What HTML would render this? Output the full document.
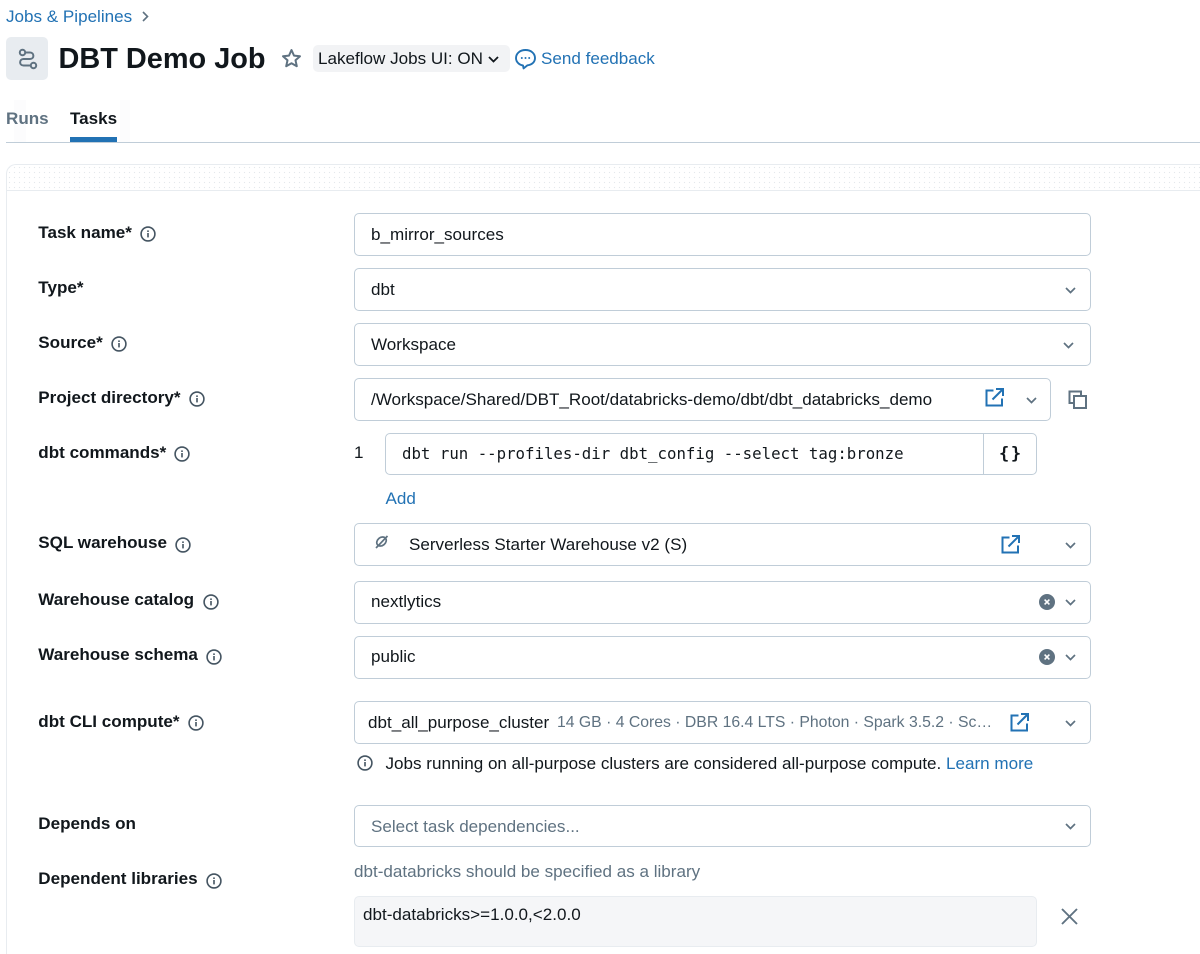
<!DOCTYPE html>
<html><head><meta charset="utf-8">
<style>
html,body{margin:0;padding:0;background:#fff;width:1200px;height:954px;overflow:hidden;}
#r{position:absolute;left:0;top:0;width:1200px;height:954px;overflow:hidden;font-family:"Liberation Sans",sans-serif;font-size:17.07px;color:#11171c;}
.a{position:absolute;white-space:nowrap;line-height:22px;}
.l{position:absolute;left:38.3px;white-space:nowrap;line-height:22px;font-weight:700;}
.box{position:absolute;box-sizing:border-box;border:1px solid #c0cdd8;border-radius:5px;background:#fff;}
.t{position:absolute;white-space:nowrap;line-height:22px;}
.link{color:#2272b4;}
svg{position:absolute;overflow:visible;}
</style></head><body><div id="r">
<svg width="0" height="0" style="position:absolute"><defs>
<g id="info"><circle cx="8" cy="8" r="6.9" fill="none" stroke="#445461" stroke-width="1.6"/><rect x="7.2" y="7" width="1.6" height="4.4" fill="#445461"/><rect x="7.2" y="4.4" width="1.6" height="1.6" fill="#445461"/></g>
<path id="chev" d="M1 1 L5.5 5.5 L10 1" fill="none" stroke="#5f7281" stroke-width="1.7"/>
<g id="ext"><path d="M8.5 2.5H1.5V17.5H17V10.5" fill="none" stroke="#2272b4" stroke-width="2"/><path d="M7.5 11.5L17.5 1.5M11 1H18V8" fill="none" stroke="#2272b4" stroke-width="2"/></g>
<g id="clr"><circle cx="8" cy="8" r="8" fill="#5f7281"/><path d="M5.6 5.6L10.4 10.4M10.4 5.6L5.6 10.4" stroke="#fff" stroke-width="1.6"/></g>
</defs></svg>

<div class="a link" style="left:6px;top:6px;">Jobs &amp; Pipelines</div>
<svg style="left:142px;top:11px" width="7" height="11"><path d="M1 1L5.5 5.5L1 10" fill="none" stroke="#5f7281" stroke-width="1.6"/></svg>

<div style="position:absolute;left:6px;top:37px;width:42px;height:43px;background:#e8ecf0;border-radius:5px;"></div>
<svg style="left:17px;top:48px" width="21" height="22" fill="none" stroke="#5f7281" stroke-width="2"><circle cx="5.5" cy="4.5" r="2.7"/><circle cx="16.5" cy="17.5" r="2.7"/><path d="M8.2 4.5H13C17.5 4.5 17.5 11 13 11H6.5C2 11 2 17.5 6.5 17.5H13.8"/></svg>
<div class="a" style="left:58.5px;top:41px;font-size:28.9px;font-weight:700;line-height:36px;">DBT Demo Job</div>
<svg style="left:281px;top:48px" width="21" height="20"><path d="M10.5 2L13 7.6L19 8.2L14.5 12.3L15.8 18.2L10.5 15.2L5.2 18.2L6.5 12.3L2 8.2L8 7.6Z" fill="none" stroke="#5f7281" stroke-width="2" stroke-linejoin="round"/></svg>
<div style="position:absolute;left:313px;top:45px;width:197px;height:27px;background:#f2f3f5;border-radius:5px;"></div>
<div class="a" style="left:318px;top:48px;">Lakeflow Jobs UI: ON</div>
<svg style="left:488px;top:56px" width="11" height="7"><path d="M1 1L5.5 5.5L10 1" fill="none" stroke="#11171c" stroke-width="1.8"/></svg>
<svg style="left:515px;top:49px" width="21" height="21"><path d="M10.5 1C5 1 1 4.5 1 9C1 13.5 5 16.2 8 16.4L8.6 19.4L12.5 16.3C17 15.8 20 13 20 9C20 4.5 16 1 10.5 1Z" fill="none" stroke="#2272b4" stroke-width="1.9" stroke-linejoin="round"/><circle cx="6.8" cy="9" r="1" fill="#2272b4"/><circle cx="10.5" cy="9" r="1" fill="#2272b4"/><circle cx="14.2" cy="9" r="1" fill="#2272b4"/></svg>
<div class="a link" style="left:541px;top:48px;">Send feedback</div>

<div style="position:absolute;left:14px;top:100px;width:12px;height:42px;background:#fcfcfd;"></div>
<div style="position:absolute;left:120px;top:100px;width:10px;height:42px;background:#fcfcfd;"></div>
<div class="a" style="left:6px;top:108px;font-weight:700;color:#5f7281;">Runs</div>
<div class="a" style="left:70px;top:108px;font-weight:700;">Tasks</div>
<div style="position:absolute;left:70px;top:137px;width:47px;height:5px;background:#2272b4;"></div>
<div style="position:absolute;left:6px;top:142px;width:1194px;height:1px;background:#c0cdd8;"></div>

<div style="position:absolute;left:6px;top:164px;width:1194px;height:790px;box-sizing:border-box;border:1px solid #e8ecf0;border-right:none;border-bottom:none;border-radius:10px 0 0 0;"></div>
<div style="position:absolute;left:7px;top:165px;width:1193px;height:25px;border-radius:9px 0 0 0;border-bottom:1px solid #e8ecf0;background-image:radial-gradient(#e4e8ec 0.7px,transparent 0.8px);background-size:5px 5px;"></div>

<!-- Task name -->
<div class="l" style="top:222px;">Task name*</div>
<svg style="left:140px;top:226px" width="16" height="16"><use href="#info"/></svg>
<div class="box" style="left:354px;top:213px;width:737px;height:43px;"></div>
<div class="t" style="left:371px;top:224px;">b_mirror_sources</div>

<!-- Type -->
<div class="l" style="top:277px;">Type*</div>
<div class="box" style="left:354px;top:268px;width:737px;height:43px;"></div>
<div class="t" style="left:371px;top:279px;">dbt</div>
<svg style="left:1065px;top:287px" width="11" height="7"><use href="#chev"/></svg>

<!-- Source -->
<div class="l" style="top:332px;">Source*</div>
<svg style="left:111px;top:336px" width="16" height="16"><use href="#info"/></svg>
<div class="box" style="left:354px;top:323px;width:737px;height:43px;"></div>
<div class="t" style="left:371px;top:334px;">Workspace</div>
<svg style="left:1063px;top:342px" width="11" height="7"><use href="#chev"/></svg>

<!-- Project dir -->
<div class="l" style="top:387px;">Project directory*</div>
<svg style="left:189px;top:391px" width="16" height="16"><use href="#info"/></svg>
<div class="box" style="left:354px;top:378px;width:697px;height:43px;"></div>
<div class="t" style="left:371px;top:389px;">/Workspace/Shared/DBT_Root/databricks-demo/dbt/dbt_databricks_demo</div>
<svg style="left:985px;top:388px" width="19" height="19"><use href="#ext"/></svg>
<svg style="left:1026px;top:397px" width="11" height="7"><use href="#chev"/></svg>
<svg style="left:1068px;top:390px" width="19" height="19" fill="none" stroke="#5f7281" stroke-width="2"><path d="M5 13H1.5V1.5H13V5"/><rect x="6" y="6" width="12" height="12" stroke="#5f7281"/></svg>

<!-- dbt commands -->
<div class="l" style="top:442px;">dbt commands*</div>
<svg style="left:174px;top:446px" width="16" height="16"><use href="#info"/></svg>
<div class="t" style="left:354px;top:442px;">1</div>
<div class="box" style="left:385px;top:433px;width:652px;height:42px;"></div>
<div style="position:absolute;left:983px;top:433px;width:1px;height:42px;background:#c0cdd8;"></div>
<div class="t" style="left:402px;top:443px;font-family:'DejaVu Sans Mono',monospace;font-size:15.73px;">dbt run --profiles-dir dbt_config --select tag:bronze</div>
<div class="t" style="left:999px;top:443px;font-family:'DejaVu Sans Mono',monospace;font-size:17px;font-weight:700;letter-spacing:1.6px;">{}</div>
<div class="a link" style="left:385.5px;top:488px;">Add</div>

<!-- SQL warehouse -->
<div class="l" style="top:532px;">SQL warehouse</div>
<svg style="left:175px;top:537px" width="16" height="16"><use href="#info"/></svg>
<div class="box" style="left:354px;top:523px;width:737px;height:43px;"></div>
<svg style="left:375px;top:535px" width="13" height="14" fill="none" stroke="#5f7281" stroke-width="1.7"><path d="M1 13L12.5 1"/><ellipse cx="6.5" cy="6.5" rx="5.2" ry="4" transform="rotate(-40 6.5 6.5)"/></svg>
<div class="t" style="left:409px;top:534px;">Serverless Starter Warehouse v2 (S)</div>
<svg style="left:1001px;top:535px" width="19" height="19"><use href="#ext"/></svg>
<svg style="left:1065px;top:542px" width="11" height="7"><use href="#chev"/></svg>

<!-- Catalog -->
<div class="l" style="top:589px;">Warehouse catalog</div>
<svg style="left:203px;top:594px" width="16" height="16"><use href="#info"/></svg>
<div class="box" style="left:354px;top:581px;width:737px;height:43px;"></div>
<div class="t" style="left:371px;top:591px;">nextlytics</div>
<svg style="left:1039px;top:594px" width="16" height="16"><use href="#clr"/></svg>
<svg style="left:1065px;top:599px" width="11" height="7"><use href="#chev"/></svg>

<!-- Schema -->
<div class="l" style="top:644px;">Warehouse schema</div>
<svg style="left:206px;top:649px" width="16" height="16"><use href="#info"/></svg>
<div class="box" style="left:354px;top:636px;width:737px;height:43px;"></div>
<div class="t" style="left:371px;top:646px;">public</div>
<svg style="left:1039px;top:649px" width="16" height="16"><use href="#clr"/></svg>
<svg style="left:1065px;top:654px" width="11" height="7"><use href="#chev"/></svg>

<!-- compute -->
<div class="l" style="top:711px;">dbt CLI compute*</div>
<svg style="left:188px;top:715px" width="16" height="16"><use href="#info"/></svg>
<div class="box" style="left:354px;top:701px;width:737px;height:43px;"></div>
<div class="t" style="left:368px;top:712px;">dbt_all_purpose_cluster</div>
<div class="t" style="left:557px;top:712px;font-size:15.78px;color:#5f7281;">14 GB · 4 Cores · DBR 16.4 LTS · Photon · Spark 3.5.2 · Sc…</div>
<svg style="left:1010px;top:713px" width="19" height="19"><use href="#ext"/></svg>
<svg style="left:1065px;top:720px" width="11" height="7"><use href="#chev"/></svg>
<svg style="left:357px;top:755px" width="16" height="16"><use href="#info"/></svg>
<div class="t" style="left:385.5px;top:753px;">Jobs running on all-purpose clusters are considered all-purpose compute. <span class="link">Learn more</span></div>

<!-- Depends -->
<div class="l" style="top:813px;">Depends on</div>
<div class="box" style="left:354px;top:805px;width:737px;height:42px;"></div>
<div class="t" style="left:371px;top:816px;color:#5f7281;">Select task dependencies...</div>
<svg style="left:1065px;top:823px" width="11" height="7"><use href="#chev"/></svg>

<!-- Libraries -->
<div class="l" style="top:868px;">Dependent libraries</div>
<svg style="left:206px;top:873px" width="16" height="16"><use href="#info"/></svg>
<div class="t" style="left:354px;top:861px;color:#5f7281;">dbt-databricks should be specified as a library</div>
<div style="position:absolute;left:354px;top:896px;width:683px;height:51px;box-sizing:border-box;background:#f5f6f8;border:1px solid #e8ecf0;border-radius:5px;"></div>
<div class="t" style="left:363px;top:904px;">dbt-databricks&gt;=1.0.0,&lt;2.0.0</div>
<svg style="left:1061px;top:908px" width="17" height="17"><path d="M1 1L16 16M16 1L1 16" stroke="#5f7281" stroke-width="1.9" fill="none"/></svg>
</div></body></html>
